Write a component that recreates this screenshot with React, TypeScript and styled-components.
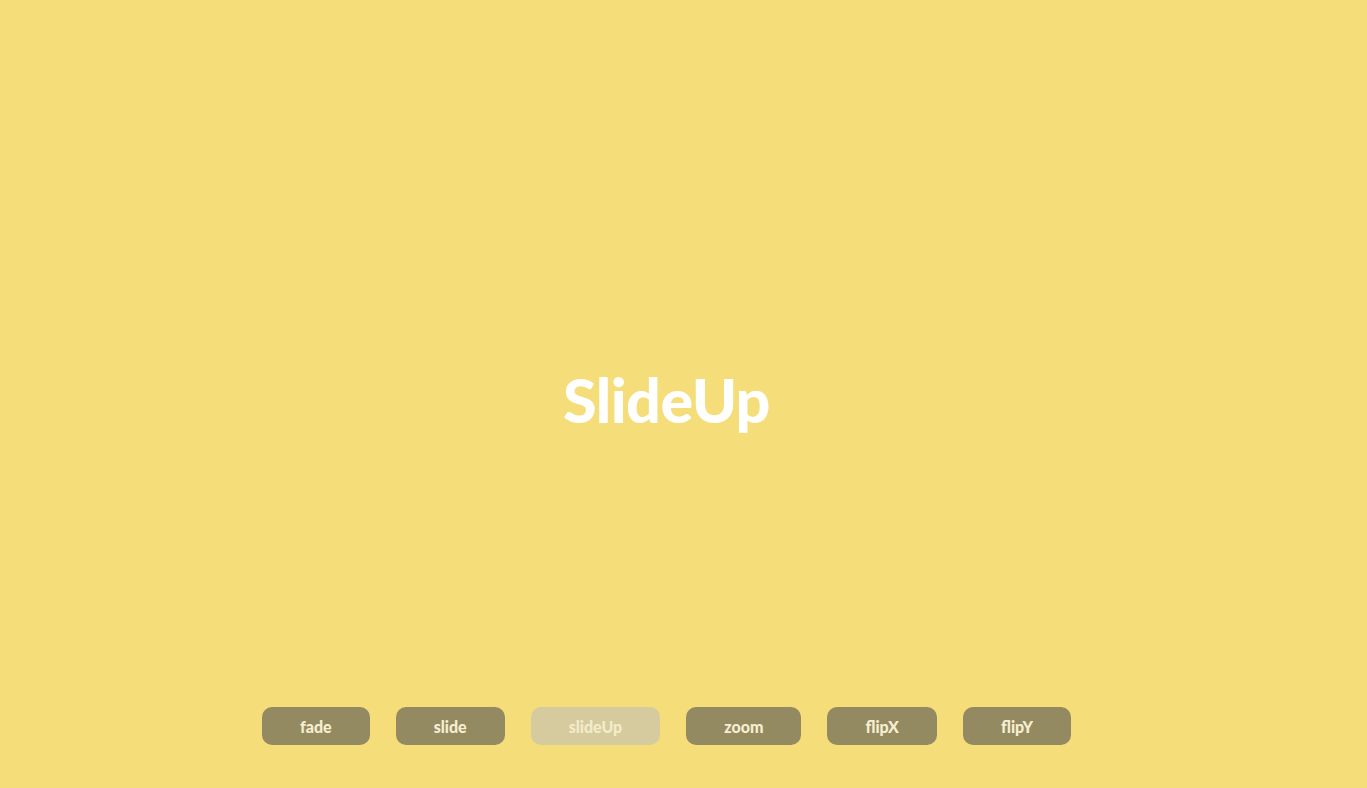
import React, { useState } from 'react';
import styled, { createGlobalStyle } from 'styled-components';

const GlobalStyle = createGlobalStyle`
  html, body {
    margin: 0;
    padding: 0;
    background: #f5dd7a;
  }
  body {
    font-family: Lato, "Open Sans", sans-serif;
  }
`;

const Page = styled.div`
  height: 100vh;
  display: flex;
  flex-direction: column;
  padding-right: 34px;
  background: #f5dd7a;
`;

const Stage = styled.div`
  flex: 1;
  display: flex;
  align-items: center;
  justify-content: center;
  padding-top: 92px;
`;

const Title = styled.h1`
  margin: 0;
  color: #ffffff;
  font-size: 61px;
  font-weight: 900;
  letter-spacing: -0.5px;
`;

const Controls = styled.div`
  display: flex;
  justify-content: center;
  gap: 26px;
  padding-bottom: 43px;
`;

const Button = styled.button<{ $active?: boolean }>`
  height: 38px;
  padding: 0 38px;
  border: none;
  border-radius: 10px;
  background: ${(p) => (p.$active ? '#d5cb9f' : '#948a62')};
  color: ${(p) => (p.$active ? '#f3ebc9' : '#f6eed0')};
  font-family: Lato, "Open Sans", sans-serif;
  font-size: 16px;
  font-weight: 900;
  cursor: pointer;
`;

const effects = ['fade', 'slide', 'slideUp', 'zoom', 'flipX', 'flipY'];

export default function App() {
  const [current, setCurrent] = useState('slideUp');
  const label = current.charAt(0).toUpperCase() + current.slice(1);
  return (
    <>
      <GlobalStyle />
      <Page>
        <Stage>
          <Title>{label}</Title>
        </Stage>
        <Controls>
          {effects.map((e) => (
            <Button key={e} $active={e === current} onClick={() => setCurrent(e)}>
              {e}
            </Button>
          ))}
        </Controls>
      </Page>
    </>
  );
}
